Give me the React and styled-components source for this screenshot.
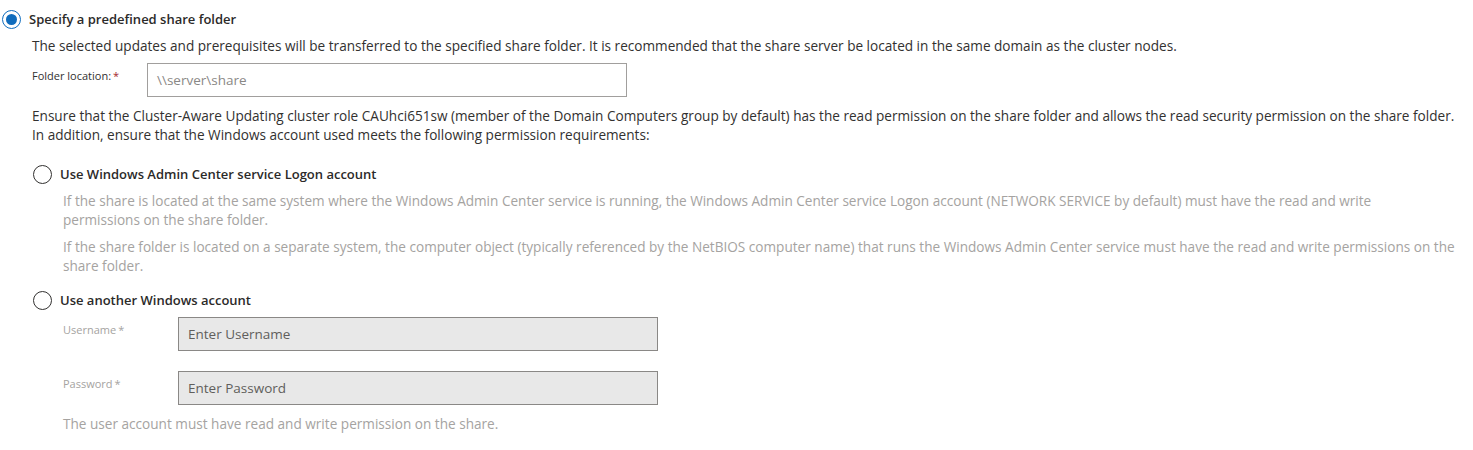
import React from "react";
import styled, { createGlobalStyle } from "styled-components";

const GlobalStyle = createGlobalStyle`
  body {
    margin: 0;
    background: #ffffff;
    font-family: "Open Sans", "Noto Sans", sans-serif;
    color: #323130;
  }
`;

const Page = styled.div`
  padding: 9px 8px 0 2px;
  font-size: 13.6px;
  line-height: 19px;
`;

const OptionRow = styled.label`
  display: flex;
  align-items: center;
  gap: 8px;
  height: 20px;
  font-size: 13px;
  font-weight: 600;
  color: #2b2a29;
`;

const RadioCircle = styled.span`
  box-sizing: border-box;
  width: 19px;
  height: 19px;
  border-radius: 50%;
  border: 1.5px solid ${p => (p.checked ? "#0f6cbd" : "#323130")};
  display: flex;
  align-items: center;
  justify-content: center;
  flex-shrink: 0;
  &::after {
    content: "";
    display: ${p => (p.checked ? "block" : "none")};
    width: 11px;
    height: 11px;
    border-radius: 50%;
    background: #0f6cbd;
  }
`;

const Section = styled.div`
  padding-left: ${p => p.indent ?? 30}px;
  padding-top: ${p => p.top || 0}px;
`;

const Para = styled.p`
  margin: ${p => p.margin || "0"};
  max-width: ${p => (p.maxWidth ? `${p.maxWidth}px` : "none")};
  color: ${p => (p.muted ? "#a5a3a1" : "#323130")};
`;

const FieldRow = styled.div`
  display: flex;
  align-items: flex-start;
  margin: ${p => p.margin || "0"};
`;

const FieldLabel = styled.span`
  width: 115px;
  flex-shrink: 0;
  font-size: 11px;
  padding-top: 3px;
  color: ${p => (p.muted ? "#a5a3a1" : "#323130")};
`;

const Star = styled.span`
  color: ${p => (p.muted ? "#a5a3a1" : "#a4262c")};
  margin-left: 2px;
`;

const TextBox = styled.div`
  box-sizing: border-box;
  width: 480px;
  height: 34px;
  border: 1px solid ${p => (p.disabled ? "#8a8886" : "#a19f9d")};
  background: ${p => (p.disabled ? "#e8e8e8" : "#ffffff")};
  padding: 0 9px;
  display: flex;
  align-items: center;
  font-size: 13.5px;
  color: ${p => (p.disabled ? "#605e5c" : "#8a8886")};
`;

function Radio({ checked, children }) {
  return (
    <OptionRow>
      <RadioCircle checked={checked} />
      {children}
    </OptionRow>
  );
}

export default function App() {
  return (
    <>
      <GlobalStyle />
      <Page>
        <Radio checked>Specify a predefined share folder</Radio>
        <Section>
          <Para margin="7px 0 0 0">
            The selected updates and prerequisites will be transferred to the specified share folder. It is recommended that the share server be located in the same domain as the cluster nodes.
          </Para>
          <FieldRow margin="8px 0 0 0">
            <FieldLabel>
              Folder location:<Star>*</Star>
            </FieldLabel>
            <TextBox>\\server\share</TextBox>
          </FieldRow>
          <Para margin="9px 0 0 0">
            Ensure that the Cluster-Aware Updating cluster role CAUhci651sw (member of the Domain Computers group by default) has the read permission on the share folder and allows the read security permission on the share folder.
            <br />
            In addition, ensure that the Windows account used meets the following permission requirements:
          </Para>
          <Section indent={1} top={20}>
            <Radio>Use Windows Admin Center service Logon account</Radio>
            <Section indent={30}>
              <Para muted margin="7px 0 0 0" maxWidth={1370}>
                If the share is located at the same system where the Windows Admin Center service is running, the Windows Admin Center service Logon account (NETWORK SERVICE by default) must have the read and write permissions on the share folder.
              </Para>
              <Para muted margin="8px 0 0 0">
                If the share folder is located on a separate system, the computer object (typically referenced by the NetBIOS computer name) that runs the Windows Admin Center service must have the read and write permissions on the share folder.
              </Para>
            </Section>
          </Section>
          <Section indent={1} top={15}>
            <Radio>Use another Windows account</Radio>
            <Section indent={30}>
              <FieldRow margin="7px 0 0 0">
                <FieldLabel muted>
                  Username<Star muted>*</Star>
                </FieldLabel>
                <TextBox disabled>Enter Username</TextBox>
              </FieldRow>
              <FieldRow margin="20px 0 0 0">
                <FieldLabel muted>
                  Password<Star muted>*</Star>
                </FieldLabel>
                <TextBox disabled>Enter Password</TextBox>
              </FieldRow>
              <Para muted margin="9px 0 0 0">
                The user account must have read and write permission on the share.
              </Para>
            </Section>
          </Section>
        </Section>
      </Page>
    </>
  );
}
